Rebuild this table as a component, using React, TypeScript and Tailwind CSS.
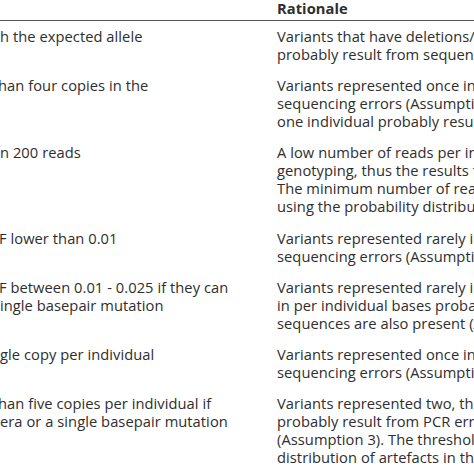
import React from "react";

const rows: { left: string[]; leftShift?: number[]; right: string[] }[] = [
  {
    left: ["h the expected allele"],
    right: [
      "Variants that have deletions/insertions in the homopolymer",
      "probably result from sequencing errors (Assumption 1).",
    ],
  },
  {
    left: ["han four copies in the"],
    leftShift: [-2],
    right: [
      "Variants represented once in the whole dataset probably result from",
      "sequencing errors (Assumption 2). Variants represented in only",
      "one individual probably result from errors as well.",
    ],
  },
  {
    left: ["n 200 reads"],
    right: [
      "A low number of reads per individual may lead to incorrect",
      "genotyping, thus the results for this individual are unreliable.",
      "The minimum number of reads was estimated",
      "using the probability distribution of the data.",
    ],
  },
  {
    left: ["F lower than 0.01"],
    leftShift: [-1],
    right: [
      "Variants represented rarely in the dataset probably result from",
      "sequencing errors (Assumption 2).",
    ],
  },
  {
    left: ["F between 0.01 - 0.025 if they can", "ingle basepair mutation"],
    leftShift: [-1, 0],
    right: [
      "Variants represented rarely in the dataset and with low frequency",
      "in per individual bases probably result from errors if the original",
      "sequences are also present (Assumption 3).",
    ],
  },
  {
    left: ["gle copy per individual"],
    right: [
      "Variants represented once in an individual probably result from",
      "sequencing errors (Assumption 2).",
    ],
  },
  {
    left: ["han five copies per individual if", "era or a single basepair mutation"],
    leftShift: [-2, 0],
    right: [
      "Variants represented two, three, four or five times per individual",
      "probably result from PCR errors if the original sequences are present",
      "(Assumption 3). The threshold was estimated from the",
      "distribution of artefacts in the dataset.",
    ],
  },
];

export default function App() {
  return (
    <div
      className="w-[474px] h-[474px] overflow-hidden bg-white text-[#2e2e2e] text-[14.7px] leading-[18px] tracking-[0.05px]"
      style={{ fontFamily: '"Open Sans", "Noto Sans", sans-serif' }}
    >
      <div className="flex h-[21px] border-b-[1.5px] border-[#555555]">
        <div className="w-[277px] shrink-0" />
        <div className="font-bold whitespace-nowrap leading-[17px]">Rationale</div>
      </div>
      <div className="flex flex-col gap-[13.2px] pt-[6px]">
        {rows.map((r, i) => (
          <div key={i} className="flex">
            <div className="w-[277px] shrink-0 overflow-hidden">
              {r.left.map((l, j) => (
                <div
                  key={j}
                  className="whitespace-nowrap"
                  style={{ marginLeft: r.leftShift ? r.leftShift[j] : 0 }}
                >
                  {l}
                </div>
              ))}
            </div>
            <div className="min-w-0">
              {r.right.map((l, j) => (
                <div key={j} className="whitespace-nowrap">
                  {l}
                </div>
              ))}
            </div>
          </div>
        ))}
      </div>
    </div>
  );
}
